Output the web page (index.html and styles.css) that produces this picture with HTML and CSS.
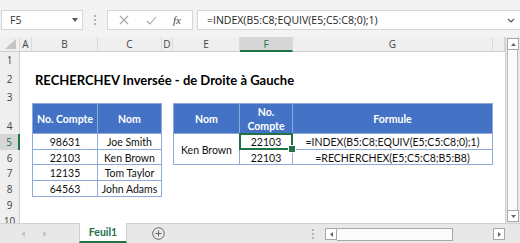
FILE: index.html
```html
<!DOCTYPE html>
<html lang="fr">
<head>
    <meta charset="UTF-8">
    <title>RECHERCHEV Inversée</title>
    <link rel="stylesheet" href="styles.css">
</head>
<body>
    <div class="app">
        <!-- barre de formule -->
        <div class="toolbar">
            <div class="namebox">
                <span>F5</span>
                <svg width="6" height="4" viewBox="0 0 6 4"><path d="M0 0h6L3 4z" fill="#555"/></svg>
            </div>
            <div class="grip"><i></i><i></i><i></i></div>
            <div class="fxbox">
                <svg width="10" height="10" viewBox="0 0 10 10"><path d="M1 1l8 8M9 1l-8 8" stroke="#a6a6a6" stroke-width="1.1" fill="none"/></svg>
                <svg width="11" height="9" viewBox="0 0 11 9"><path d="M1 5l3 3 6-7" stroke="#a6a6a6" stroke-width="1.1" fill="none"/></svg>
                <span class="fx">fx</span>
            </div>
            <div class="formula">
                <span>=INDEX(B5:C8;EQUIV(E5;C5:C8;0);1)</span>
                <svg width="8" height="5" viewBox="0 0 8 5"><path d="M1 1l3 3 3-3" stroke="#555" stroke-width="1.1" fill="none"/></svg>
            </div>
        </div>

        <div class="main">
            <div class="sheet">
                <!-- en-têtes de colonnes -->
                <div class="ch corner"><svg width="11" height="10" viewBox="0 0 11 10"><path d="M11 0v10H0z" fill="#c4c4c4"/></svg></div>
                <div class="ch">A</div><div class="ch">B</div><div class="ch">C</div><div class="ch">D</div>
                <div class="ch">E</div><div class="ch active">F</div><div class="ch">G</div><div class="ch"></div>

                <!-- ligne 1 -->
                <div class="rh">1</div><div></div><div></div><div></div><div></div><div></div><div></div><div></div><div></div>

                <!-- ligne 2 -->
                <div class="rh">2</div><div></div>
                <div class="c title">RECHERCHEV Inversée - de Droite à Gauche</div>
                <div></div><div></div><div></div><div></div><div></div><div></div>

                <!-- ligne 3 -->
                <div class="rh">3</div><div></div><div></div><div></div><div></div><div></div><div></div><div></div><div></div>

                <!-- ligne 4 -->
                <div class="rh bottom">4</div><div></div>
                <div class="c t hd tl">No. Compte</div>
                <div class="c t hd">Nom</div>
                <div></div>
                <div class="c t hd tl">Nom</div>
                <div class="c t hd wrap">No.<br>Compte</div>
                <div class="c t hd">Formule</div>
                <div></div>

                <!-- ligne 5 -->
                <div class="rh active">5</div><div></div>
                <div class="c t tl">98631</div>
                <div class="c t">Joe Smith</div>
                <div></div>
                <div class="c t tl span2">Ken Brown</div>
                <div class="c t sel">22103</div>
                <div class="c t">=INDEX(B5:C8;EQUIV(E5;C5:C8;0);1)</div>
                <div></div>

                <!-- ligne 6 -->
                <div class="rh">6</div><div></div>
                <div class="c t tl">22103</div>
                <div class="c t">Ken Brown</div>
                <div></div>
                <div class="c t">22103</div>
                <div class="c t">=RECHERCHEX(E5;C5:C8;B5:B8)</div>
                <div></div>

                <!-- ligne 7 -->
                <div class="rh">7</div><div></div>
                <div class="c t tl">12135</div>
                <div class="c t">Tom Taylor</div>
                <div></div><div></div><div></div><div></div><div></div>

                <!-- ligne 8 -->
                <div class="rh">8</div><div></div>
                <div class="c t tl">64563</div>
                <div class="c t">John Adams</div>
                <div></div><div></div><div></div><div></div><div></div>

                <!-- lignes 9, 10 -->
                <div class="rh">9</div><div></div><div></div><div></div><div></div><div></div><div></div><div></div><div></div>
                <div class="rh">10</div><div></div><div></div><div></div><div></div><div></div><div></div><div></div><div></div>
            </div>

            <div class="vscroll">
                <div class="sbtn"><svg width="5" height="3" viewBox="0 0 5 3"><path d="M0 3h5L2.5 0z" fill="#666"/></svg></div>
                <div class="vthumb"></div>
                <div class="sbtn"><svg width="5" height="3" viewBox="0 0 5 3"><path d="M0 0h5L2.5 3z" fill="#666"/></svg></div>
            </div>
        </div>

        <!-- onglets -->
        <div class="tabs">
            <div class="nav">
                <svg width="4" height="6" viewBox="0 0 4 6"><path d="M4 0v6L0 3z" fill="#c6c6c6"/></svg>
                <svg width="4" height="6" viewBox="0 0 4 6"><path d="M0 0v6l4-3z" fill="#c6c6c6"/></svg>
            </div>
            <div class="tab">Feuil1</div>
            <div class="add">
                <svg width="13" height="13" viewBox="0 0 13 13"><circle cx="6.5" cy="6.5" r="5.8" stroke="#666" fill="none"/><path d="M6.5 3.5v6M3.5 6.5h6" stroke="#666"/></svg>
            </div>
            <div class="tgrip"><i></i><i></i><i></i></div>
            <div class="hscroll">
                <div class="sbtn"><svg width="3" height="5" viewBox="0 0 3 5"><path d="M3 0v5L0 2.5z" fill="#666"/></svg></div>
                <div class="hthumb"></div>
                <div class="htrack"></div>
                <div class="sbtn"><svg width="3" height="5" viewBox="0 0 3 5"><path d="M0 0v5l3-2.5z" fill="#666"/></svg></div>
            </div>
        </div>
    </div>
</body>
</html>
```

FILE: styles.css
```css
* {
    box-sizing: border-box;
}

body {
    margin: 0;
    width: 520px;
    height: 243px;
    overflow: hidden;
    background: #fff;
    font-family: "Open Sans", "Noto Sans", sans-serif;
}

.app {
    display: flex;
    flex-direction: column;
    height: 243px;
}

/* barre de formule */
.toolbar {
    flex: none;
    height: 37px;
    display: flex;
    align-items: flex-start;
    padding-top: 10px;
    background: #f3f3f3;
}

.namebox {
    width: 82px;
    height: 20px;
    margin-left: 1px;
    display: flex;
    align-items: center;
    justify-content: space-between;
    padding: 0 4px 0 8px;
    background: #fff;
    border: 1px solid #d6d6d6;
    font-size: 10.5px;
    color: #333;
}

.grip {
    width: 24px;
    height: 20px;
    display: flex;
    flex-direction: column;
    align-items: center;
    justify-content: center;
    gap: 2px;
}

.grip i, .tgrip i {
    width: 2px;
    height: 2px;
    background: #b5b5b5;
}

.fxbox {
    width: 86px;
    height: 20px;
    display: flex;
    align-items: center;
    padding-left: 11px;
    gap: 17px;
    background: #fff;
    border: 1px solid #d6d6d6;
}

.fx {
    font-family: "Liberation Serif", serif;
    font-style: italic;
    font-size: 11px;
    color: #444;
    margin-left: -1px;
}

.formula {
    flex: 1;
    height: 20px;
    margin-left: 4px;
    display: flex;
    align-items: center;
    justify-content: space-between;
    padding: 0 5px 0 9px;
    background: #fff;
    border: 1px solid #d6d6d6;
    border-right: none;
    font-size: 10.5px;
    color: #222;
}

/* feuille */
.main {
    flex: none;
    height: 186px;
    display: flex;
    overflow: hidden;
}

.sheet {
    width: 505px;
    display: grid;
    grid-template-columns: 20px 12px 66px 64px 11px 67px 53px 200px 12px;
    grid-template-rows: 15px 16px 22px 13px 31px 16px 15px 16px 16px 16px 16px;
    font-family: Lato, "Liberation Sans", sans-serif;
    font-size: 10.5px;
    color: #111;
}

.ch {
    display: flex;
    align-items: center;
    justify-content: center;
    background: #efefef;
    border-right: 1px solid #d8d8d8;
    border-bottom: 1px solid #cfcfcf;
    font-family: "Open Sans", sans-serif;
    font-size: 10px;
    color: #444;
}

.ch.corner {
    justify-content: flex-end;
    align-items: flex-end;
    padding: 0 3px 2px 0;
}

.ch.active {
    background: #d6d6d6;
    border-bottom: 2px solid #217346;
    color: #217346;
}

.rh {
    display: flex;
    align-items: center;
    justify-content: center;
    background: #efefef;
    border-right: 1px solid #cfcfcf;
    font-family: "Open Sans", sans-serif;
    font-size: 10px;
    color: #444;
}

.rh.bottom {
    align-items: flex-end;
    padding-bottom: 1px;
}

.rh.active {
    background: #d6d6d6;
    border-right: 2px solid #217346;
    color: #217346;
}

.c {
    display: flex;
    align-items: center;
    justify-content: center;
    white-space: nowrap;
    padding-top: 1px;
}

.title {
    justify-content: flex-start;
    padding-left: 3px;
    font-size: 13px;
    font-weight: bold;
    color: #000;
}

.t {
    border-right: 1px solid #8eaadb;
    border-bottom: 1px solid #8eaadb;
}

.tl {
    border-left: 1px solid #8eaadb;
}

.hd {
    background: #4472c4;
    border-top: 1px solid #8eaadb;
    color: #fff;
    font-weight: bold;
}

.hd.wrap {
    text-align: center;
    line-height: 14px;
}

.span2 {
    grid-row: span 2;
}

.sel {
    position: relative;
}

.sel::after {
    content: "";
    position: absolute;
    top: -1px;
    left: -1px;
    right: -1px;
    bottom: -1px;
    border: 2px solid #217346;
    z-index: 1;
}

.sel::before {
    content: "";
    position: absolute;
    right: -4px;
    bottom: -4px;
    width: 6px;
    height: 6px;
    background: #217346;
    border: 1px solid #fff;
    z-index: 2;
}

/* défilement vertical */
.vscroll {
    width: 15px;
    display: flex;
    flex-direction: column;
    padding: 1px 2px 1px 1px;
    background: #e9e9e9;
    border-left: 1px solid #d0d0d0;
}

.sbtn {
    flex: none;
    width: 12px;
    height: 12px;
    display: flex;
    align-items: center;
    justify-content: center;
    background: #fff;
    border: 1px solid #a8a8a8;
}

.vthumb {
    flex: 1;
    background: #fbfbfb;
    border-left: 1px solid #bdbdbd;
    border-right: 1px solid #bdbdbd;
}

/* onglets */
.tabs {
    flex: none;
    height: 20px;
    display: flex;
    background: #e8e8e8;
    border-top: 1px solid #d2d2d2;
}

.nav {
    width: 79px;
    display: flex;
    align-items: center;
    gap: 18px;
    padding-left: 21px;
}

.tab {
    width: 48px;
    margin-top: -1px;
    display: flex;
    align-items: center;
    justify-content: center;
    background: #fff;
    border-left: 1px solid #cfcfcf;
    border-right: 1px solid #cfcfcf;
    border-bottom: 2px solid #217346;
    font-family: Lato, sans-serif;
    font-weight: bold;
    font-size: 10.5px;
    color: #217346;
}

.add {
    width: 60px;
    display: flex;
    align-items: center;
    padding-left: 25px;
}

.tgrip {
    width: 138px;
    display: flex;
    flex-direction: column;
    align-items: center;
    justify-content: center;
    gap: 2px;
    padding-left: 114px;
}

.hscroll {
    width: 180px;
    height: 13px;
    margin-top: 4px;
    display: flex;
}

.hthumb {
    width: 116px;
    background: #fbfbfb;
    border-top: 1px solid #a8a8a8;
    border-bottom: 1px solid #a8a8a8;
    border-right: 1px solid #a8a8a8;
}

.htrack {
    flex: 1;
}
```
